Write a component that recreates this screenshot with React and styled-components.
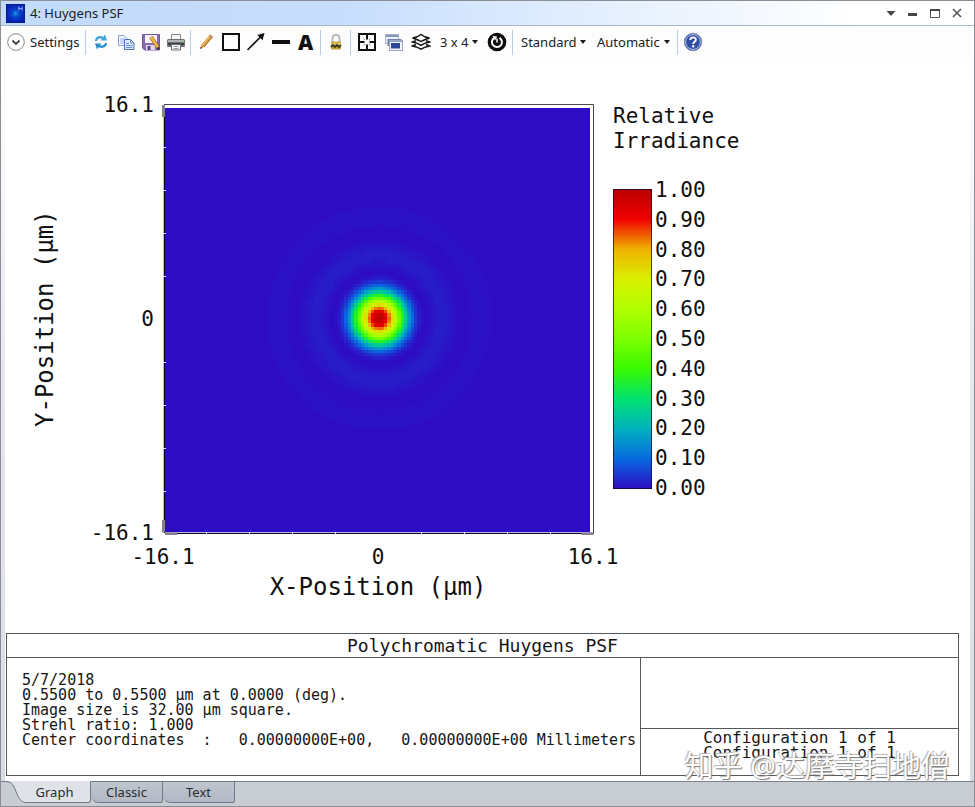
import React from 'react';
import styled, { createGlobalStyle, css } from 'styled-components';

const ui = '"Noto Sans", "Open Sans", sans-serif';
const mono = '"DejaVu Sans Mono", "Liberation Mono", monospace';

const GlobalStyle = createGlobalStyle`
  *, *::before, *::after {
    box-sizing: border-box;
  }

  body {
    margin: 0;
    background: #ffffff;
  }

  button, select {
    font: inherit;
    color: inherit;
  }
`;

const Window = styled.div`
  position: relative;
  display: flex;
  flex-direction: column;
  min-height: 100vh;
  border: 1px solid #8b8e94;
  background: #ffffff;
  color: #1c1c1c;
  font-family: ${ui};
  font-size: 13px;
`;

const TitleBar = styled.header`
  display: flex;
  align-items: center;
  height: 25px;
  padding: 0 6px 0 5px;
  border-bottom: 1px solid #a9b7cc;
  background: linear-gradient(90deg, #c3dbfb 0%, #c6ddfd 34%, #e2eefe 60%, #ffffff 88%);
`;

const WindowTitle = styled.h1`
  flex: 1;
  margin: 0 0 0 5px;
  font-size: 13px;
  font-weight: 400;
  line-height: 20px;
`;

const WindowButton = styled.button`
  display: flex;
  align-items: center;
  justify-content: center;
  width: 22px;
  height: 20px;
  padding: 0;
  border: 0;
  background: none;
`;

const Toolbar = styled.div`
  display: flex;
  align-items: center;
  height: 32px;
  padding-left: 4px;
  background: #fdfdfe;
`;

const SettingsButton = styled.button`
  display: flex;
  align-items: center;
  gap: 4px;
  width: 78px;
  height: 28px;
  padding: 0 0 0 1px;
  border: 0;
  background: none;
`;

const ToolButton = styled.button`
  display: flex;
  align-items: center;
  justify-content: center;
  width: ${({ $wide }) => ($wide ? 27 : 25)}px;
  height: 28px;
  padding: 0;
  border: 0;
  background: none;
`;

const Separator = styled.span`
  width: 1px;
  height: 25px;
  margin: 0 2px;
  background: #bccbe4;
`;

const DropDownWrapper = styled.label`
  display: flex;
  align-items: center;
  width: ${({ $width }) => $width}px;
  height: 28px;
  padding-left: 6px;
`;

const DropDownSelect = styled.select`
  flex: 1;
  min-width: 0;
  padding: 0;
  border: 0;
  appearance: none;
  background: none;
`;

const Caret = styled.svg`
  flex: none;
  width: 6px;
  height: 4px;
  margin-right: 5px;
`;

const Main = styled.main`
  display: flex;
  flex: 1;
  flex-direction: column;
  justify-content: space-between;
  padding-bottom: 5px;
  border: solid transparent;
  border-width: 0 4px;
  background:
    linear-gradient(#ffffff, #ffffff) padding-box,
    linear-gradient(#ffffff 0%, #e6e8ec 45%, #d9dce1 100%) border-box;
`;

const Chart = styled.section`
  display: grid;
  grid-template-columns: 28px 103px 432px 1fr;
  grid-template-rows: 432px auto;
  padding: 45px 0 24px 26px;
  color: #101010;
  font-family: ${mono};
`;

const AxisTitle = styled.div`
  font-size: 24px;
  line-height: 28px;
  text-align: center;
  white-space: nowrap;

  ${({ $vertical }) =>
    $vertical &&
    css`
      writing-mode: vertical-rl;
      transform: rotate(180deg);
    `}
`;

const YTicks = styled.div`
  display: flex;
  flex-direction: column;
  justify-content: space-between;
  margin: -8px 0;
  font-size: 21px;
  line-height: 20px;
  text-align: right;
`;

const XAxis = styled.div`
  grid-column: 3;
  padding-top: 12px;
`;

const XTicks = styled.div`
  display: flex;
  justify-content: space-between;
  margin: 0 -32px 6px;
  font-size: 21px;
  line-height: 20px;
  text-align: center;

  span {
    width: 66px;
  }
`;

const PlotArea = styled.svg`
  display: block;
  width: 432px;
  height: 432px;
`;

const YTickColumn = styled.div`
  display: grid;
  padding-right: 8px;
`;

const Legend = styled.div`
  padding: 1px 0 0 19px;
`;

const LegendTitle = styled.div`
  margin-bottom: 35px;
  font-size: 21px;
  line-height: 25px;
`;

const LegendScale = styled.div`
  display: flex;
  gap: 3px;
  height: 300px;
`;

const LegendBar = styled.div`
  width: 39px;
  border: 1px solid rgba(20, 10, 40, 0.75);
  background: linear-gradient(to top, ${({ $stops }) => $stops});
  background-origin: border-box;
`;

const LegendTicks = styled.div`
  display: flex;
  flex-direction: column;
  justify-content: space-between;
  margin: -9px 0;
  font-size: 21px;
  line-height: 20px;
`;

const InfoPanel = styled.section`
  margin: 0 11px 0 1px;
  border: 1px solid #55585a;
  color: #161616;
  font-family: ${mono};
`;

const InfoTitle = styled.h2`
  margin: 0;
  border-bottom: 1px solid #55585a;
  font-size: 18px;
  font-weight: 400;
  line-height: 23px;
  text-align: center;
`;

const InfoBody = styled.div`
  display: grid;
  grid-template-columns: 2fr 1fr;
`;

const InfoText = styled.pre`
  min-height: 117px;
  margin: 0;
  padding: 15px 0 0 15px;
  border-right: 1px solid #55585a;
  font-family: inherit;
  font-size: 15px;
  line-height: 15px;
`;

const InfoSide = styled.div`
  display: grid;
  grid-template-rows: 70px 1fr;
`;

const Configuration = styled.div`
  padding-top: 1px;
  border-top: 1px solid #55585a;
  font-size: 16px;
  line-height: 15px;
  text-align: center;
`;

const TabStrip = styled.nav`
  display: flex;
  align-items: flex-start;
  height: 25px;
  background: #c8ccd3;
  box-shadow: inset 0 1px #7d828c;
`;

const TabEdge = styled.svg`
  flex: none;
  width: 24px;
  height: 22px;
`;

const Tab = styled.button`
  width: 72px;
  height: 22px;
  padding: 0;
  border: 1px solid #737a88;
  border-left-width: 0;
  border-radius: 0 0 2px 8px;
  background: linear-gradient(#bfc5cf, #b2b9c5);
  color: #2a2d33;
  line-height: 20px;

  ${({ $active }) =>
    $active &&
    css`
      width: 66px;
      padding-right: 6px;
      border-top-color: #dfe2e6;
      border-radius: 0 0 3px 0;
      background: #dfe2e6;
    `}
`;

const Watermark = styled.div`
  position: absolute;
  right: 24px;
  bottom: 22px;
  color: #ffffff;
  font-family: 'Noto Sans', 'Noto Sans CJK SC', sans-serif;
  font-size: 29px;
  line-height: 36px;
  text-shadow: 1px 1px 1px #777777, -1px -1px 1px #b5b5b5;
  white-space: nowrap;
  pointer-events: none;
`;

// false colour scale, from zero to peak
const SCALE = [
  [0, [46, 12, 196]],
  [0.1, [8, 104, 224]],
  [0.2, [0, 176, 190]],
  [0.3, [0, 226, 112]],
  [0.4, [56, 250, 0]],
  [0.5, [124, 255, 0]],
  [0.6, [176, 255, 0]],
  [0.7, [216, 240, 0]],
  [0.8, [240, 176, 0]],
  [0.9, [240, 0, 0]],
  [1, [186, 0, 0]],
];

const CELLS = 128;
const AIRY_UNIT = 11.5;
const LEVELS = 250;

const colorAt = (value) => {
  const i = Math.min(Math.floor(value * 10), 9);
  const t = value * 10 - i;
  const mixed = SCALE[i][1].map((c, k) => Math.round(c + (SCALE[i + 1][1][k] - c) * t));
  return `rgb(${mixed.join(',')})`;
};

const besselJ1 = (x) => {
  const steps = 40;
  let sum = 0;
  for (let i = 0; i < steps; i += 1) {
    const t = ((i + 0.5) * Math.PI) / steps;
    sum += Math.cos(t - x * Math.sin(t));
  }
  return sum / steps;
};

const irradiance = (r) => {
  const x = (Math.PI * r) / AIRY_UNIT;
  return x < 0.01 ? 1 : ((2 * besselJ1(x)) / x) ** 2;
};

// one path per colour level, made of horizontal runs of cells
const buildSpot = () => {
  const paths = {};
  for (let y = 0; y < CELLS; y += 1) {
    let start = 0;
    let level = null;
    for (let x = 0; x <= CELLS; x += 1) {
      const r = Math.hypot(x - 64, y - 63);
      const next = x === CELLS ? null : Math.round(irradiance(r) * LEVELS);
      if (next !== level) {
        if (level) {
          paths[level] = `${paths[level] || ''}M${start} ${y}H${x}V${y + 1}H${start}Z`;
        }
        start = x;
        level = next;
      }
    }
  }
  return Object.entries(paths);
};

const SPOT = buildSpot();
const TICKS = [44, 87, 130, 173, 259, 302, 345, 388];
const LEGEND_VALUES = ['1.00', '0.90', '0.80', '0.70', '0.60', '0.50', '0.40', '0.30', '0.20', '0.10', '0.00'];
const LEGEND_STOPS = SCALE.map(([v, c]) => `rgb(${c.join(',')}) ${v * 100}%`).join(', ');

const INFO = `5/7/2018
0.5500 to 0.5500 µm at 0.0000 (deg).
Image size is 32.00 µm square.
Strehl ratio: 1.000
Center coordinates  :   0.00000000E+00,   0.00000000E+00 Millimeters`;

const Plot = () => (
  <PlotArea viewBox="0 0 432 432" role="img" aria-label="Point spread function">
    <path d="M2 1.5H431.5V431" fill="none" stroke="#4a464e" />
    <rect x="3" y="5" width="425" height="424" fill="#2e0cc4" />
    <svg x="3" y="5" width="425" height="424" viewBox="0 0 128 128" preserveAspectRatio="none">
      <g shapeRendering="crispEdges">
        {SPOT.map(([level, d]) => (
          <path key={level} d={d} fill={colorAt(level / LEVELS)} />
        ))}
      </g>
    </svg>
    <path d="M1.5 5V430" stroke="#b9b5cc" />
    <path d="M2.5 5V430" stroke="#0c0828" />
    <path d="M3 429.5H430" stroke="#b9b5e0" />
    <path d="M3 430.5H430" stroke="#0c0828" />
    {TICKS.map((t) => (
      <path key={t} d={`M1 ${t}.5H4M${t}.5 429V431`} stroke="#e8e6f4" />
    ))}
    <path d="M1.5 2V14M1.5 417V429M3 431H15M419 431H431" stroke="#85818f" strokeWidth="3" />
  </PlotArea>
);

const Icon = ({ size = 20, children }) => (
  <svg width={size} height={size} viewBox="0 0 20 20" fill="none" aria-hidden="true">
    {children}
  </svg>
);

const AppIcon = () => (
  <Icon size={19}>
    <defs>
      <radialGradient id="spot">
        <stop offset="0" stopColor="#1c9be8" />
        <stop offset="0.35" stopColor="#0a4ad0" />
        <stop offset="1" stopColor="#0620b0" />
      </radialGradient>
    </defs>
    <rect x="0.5" y="0.5" width="19" height="19" fill="url(#spot)" stroke="#06188a" />
    <path d="M13.5 2.5V7M17 2.5V7M13.5 4.7H17" stroke="#8fb4f4" />
  </Icon>
);

const ExpandIcon = () => (
  <Icon>
    <circle cx="10" cy="10" r="8.3" stroke="#8a8a8a" fill="#ffffff" />
    <path d="M6.5 8.5L10 12L13.5 8.5" stroke="#404040" strokeWidth="1.8" />
  </Icon>
);

const RefreshIcon = () => (
  <Icon>
    <path d="M4 9C4 5.500 7 3.500 11 4.200L12.500 4.800L14 2.500L16 8.500L9.500 8.500L11 6.800C8 6 6.500 7 6 9Z" fill="#45a6dc" />
    <path d="M16 11C16 14.500 13 16.500 9 15.800L7.500 15.200L6 17.500L4 11.500L10.500 11.500L9 13.200C12 14 13.500 13 14 11Z" fill="#2d8dcc" />
  </Icon>
);

const CopyIcon = () => (
  <Icon>
    <path d="M2.500 3.500H8L11.500 7V13.500H2.500Z" fill="#eef4fd" stroke="#86a5d4" />
    <path d="M4 7H9M4 9H9M4 11H8" stroke="#9db8e2" />
    <path d="M8.500 7.500H14.500L18 11V17.500H8.500Z" fill="#dce9fb" stroke="#4774bc" />
    <path d="M14.500 7.500V11H18M10 11.500H13M10 13.500H16.500M10 15.500H16.500" stroke="#6c94d2" />
  </Icon>
);

const SaveIcon = () => (
  <Icon>
    <path d="M1.500 2.500H18.500V18H3.500L1.500 16Z" fill="#8c6bb2" stroke="#77569e" />
    <rect x="4" y="3" width="12" height="8" fill="#f6f2fa" />
    <rect x="5" y="13" width="9" height="5" fill="#e0d8ec" />
    <rect x="6.500" y="14" width="3" height="4" fill="#5d4386" />
    <path d="M10 5L17 15.500" stroke="#99651b" strokeWidth="4" />
    <path d="M10 5L17 15.500" stroke="#f0b747" strokeWidth="2.500" />
    <path d="M15.500 16.500L18 14.500L18.500 18Z" fill="#33241a" />
  </Icon>
);

const PrintIcon = () => (
  <Icon>
    <path d="M5.500 8V2.500H14.500V8" fill="#f8f8f8" stroke="#87898c" />
    <rect x="1" y="7" width="18" height="8" rx="1.500" fill="#6f7378" />
    <path d="M2 9H18" stroke="#c6cacd" strokeWidth="1.500" />
    <path d="M2 12H18" stroke="#3c4044" strokeWidth="2" />
    <path d="M5.500 12.500H14.500V18H5.500Z" fill="#f4f5f6" stroke="#6a6d71" />
    <path d="M7.500 14.500H12.500M7.500 16.500H12.500" stroke="#999c9f" />
    <circle cx="16.500" cy="10" r="1" fill="#6cc04a" />
  </Icon>
);

const PencilIcon = () => (
  <Icon>
    <path d="M4 17L5.300 12.800L14 2.500L16.700 4.800L8 15Z" fill="#dc9b42" />
    <path d="M6 13.500L14.500 3.500" stroke="#f3c77c" />
    <path d="M8 15L16.700 4.800" stroke="#a96b22" />
    <path d="M14 2.500L16.700 4.800L15.500 6.200L12.800 3.900Z" fill="#c58b78" />
    <path d="M4 17L4.700 14.800L6.200 16Z" fill="#4f3929" />
  </Icon>
);

const SquareIcon = () => (
  <Icon>
    <rect x="2" y="2" width="16" height="16" stroke="#101010" strokeWidth="2" />
  </Icon>
);

const ArrowIcon = () => (
  <Icon>
    <path d="M1.500 18L15 4.500" stroke="#101010" strokeWidth="1.600" />
    <path d="M18.500 1L16.500 8.200L11.300 3Z" fill="#101010" />
  </Icon>
);

const LineIcon = () => (
  <Icon>
    <rect x="1" y="8" width="18" height="4" fill="#101010" />
  </Icon>
);

const LetterIcon = styled.span`
  color: #101010;
  font-family: 'Open Sans', sans-serif;
  font-size: 21px;
  font-weight: 800;
  line-height: 24px;
`;

const LockIcon = () => (
  <Icon>
    <path d="M6.500 10V6.500C6.500 1.500 13.500 1.500 13.500 6.500V10" stroke="#b7babe" strokeWidth="2" />
    <rect x="5" y="9.500" width="10" height="8" rx="1" fill="#c5a83e" />
    <path d="M5 12H15" stroke="#ead984" strokeWidth="1.500" />
    <path d="M5 15L7 13L9 15L11 13L13 15L15 13" stroke="#493e20" strokeWidth="2" />
  </Icon>
);

const TargetIcon = () => (
  <Icon>
    <rect x="2" y="2" width="16" height="16" stroke="#101010" strokeWidth="2" />
    <path d="M10 2V7.500M10 12.500V18M2 10H7.500M12.500 10H18" stroke="#101010" strokeWidth="2" />
    <path d="M6.500 6.500L8 8M13.500 6.500L12 8M6.500 13.500L8 12M13.500 13.500L12 12" stroke="#8a8a8a" />
  </Icon>
);

const WindowsIcon = () => (
  <Icon>
    <rect x="1.500" y="2.500" width="13" height="9" fill="#edf1f8" stroke="#a9b4cc" />
    <path d="M2 4H14" stroke="#8196bd" strokeWidth="2" />
    <path d="M4.500 14V8H17.500" fill="#5670ad" stroke="#6b81b4" strokeWidth="2" />
    <rect x="5.500" y="8.500" width="13" height="10" fill="#f4f6fb" stroke="#9aa7c4" />
    <rect x="7" y="11" width="9" height="5.500" fill="#2a4798" />
    <path d="M6 9.500H18" stroke="#8da2cb" />
  </Icon>
);

// three stacked sheets with slightly wavy edges
const LayersIcon = () => (
  <Icon>
    <path
      d="M1.500 6C4 5.800 7.500 4.500 10 2.500C12.500 4.500 16 5.800 18.500 6C16 6.800 12.500 7.800 10 9.500C7.500 7.800 4 6.800 1.500 6Z"
      stroke="#151515"
      strokeWidth="1.500"
    />
    <path
      d="M5 8.700L1.500 10C4 10.500 7.500 11.500 10 13.300C12.500 11.500 16 10.500 18.500 10L15 8.700M5 12.500L1.500 14C4 14.500 7.500 15.500 10 17.200C12.500 15.500 16 14.500 18.500 14L15 12.500"
      stroke="#151515"
      strokeWidth="1.500"
    />
  </Icon>
);

const ResetIcon = () => (
  <Icon>
    <circle cx="10" cy="10" r="9.300" fill="#0c0c0c" />
    <path d="M12.500 5.800A5 5 0 1 1 7.200 5.900" stroke="#ffffff" strokeWidth="2" />
    <path d="M5.500 3.800L10.200 4.500L8 8.500Z" fill="#ffffff" />
    <path d="M10 6.500V10.500" stroke="#ffffff" strokeWidth="1.500" />
  </Icon>
);

const HelpIcon = () => (
  <Icon>
    <circle cx="10" cy="10" r="8.800" fill="#2d4fa6" stroke="#8b93b8" />
    <circle cx="10" cy="10" r="7.400" stroke="#b9c5e5" />
    <path d="M7.300 8C7.300 4.600 12.900 4.600 12.900 7.800C12.900 9.900 10.200 9.800 10.200 12" stroke="#ffffff" strokeWidth="1.900" />
    <circle cx="10.200" cy="14.300" r="1.200" fill="#ffffff" />
  </Icon>
);

const DropDown = ({ label, value, width }) => (
  <DropDownWrapper $width={width}>
    <DropDownSelect aria-label={label} defaultValue={value}>
      <option>{value}</option>
    </DropDownSelect>
    <Caret viewBox="0 0 6 4" aria-hidden="true">
      <path d="M0 0H6L3 4Z" fill="#1c1c1c" />
    </Caret>
  </DropDownWrapper>
);

const fileTools = [
  ['Refresh', RefreshIcon],
  ['Copy', CopyIcon],
  ['Save', SaveIcon],
  ['Print', PrintIcon],
];

const drawTools = [
  ['Pencil', PencilIcon],
  ['Rectangle', SquareIcon],
  ['Arrow', ArrowIcon],
  ['Line', LineIcon],
];

const viewTools = [
  ['Active cursor', TargetIcon],
  ['Clone window', WindowsIcon],
  ['Overlay', LayersIcon],
];

const Tools = ({ items, wide }) =>
  items.map(([label, Glyph]) => (
    <ToolButton key={label} aria-label={label} $wide={wide}>
      <Glyph />
    </ToolButton>
  ));

const App = () => (
  <>
    <GlobalStyle />
    <Window>
      <TitleBar>
        <AppIcon />
        <WindowTitle>4: Huygens PSF</WindowTitle>
        <WindowButton aria-label="Window menu">
          <svg width="10" height="5" viewBox="0 0 10 5">
            <path d="M0.500 0H9.500L5 5Z" fill="#454545" />
          </svg>
        </WindowButton>
        <WindowButton aria-label="Minimize">
          <svg width="10" height="10" viewBox="0 0 10 10">
            <rect x="0" y="5" width="9" height="3" fill="#454545" />
          </svg>
        </WindowButton>
        <WindowButton aria-label="Maximize">
          <svg width="10" height="9" viewBox="0 0 10 9">
            <path d="M0.500 1V8.500H9.500V1" fill="none" stroke="#555555" />
            <rect width="10" height="2" fill="#454545" />
          </svg>
        </WindowButton>
        <WindowButton aria-label="Close">
          <svg width="10" height="10" viewBox="0 0 10 10">
            <path d="M1 1L9 9M9 1L1 9" stroke="#505050" strokeWidth="1.500" />
          </svg>
        </WindowButton>
      </TitleBar>

      <Toolbar>
        <SettingsButton>
          <ExpandIcon />
          Settings
        </SettingsButton>
        <Separator />
        <Tools items={fileTools} />
        <Separator />
        <Tools items={drawTools} />
        <ToolButton aria-label="Text annotation">
          <LetterIcon>A</LetterIcon>
        </ToolButton>
        <Separator />
        <ToolButton aria-label="Lock window">
          <LockIcon />
        </ToolButton>
        <Separator />
        <Tools items={viewTools} wide />
        <DropDown label="Window size" value="3 x 4" width={49} />
        <ToolButton aria-label="Reset" $wide>
          <ResetIcon />
        </ToolButton>
        <Separator />
        <DropDown label="Line thickness" value="Standard" width={76} />
        <DropDown label="Scaling" value="Automatic" width={84} />
        <Separator />
        <ToolButton aria-label="Help">
          <HelpIcon />
        </ToolButton>
      </Toolbar>

      <Main>
        <Chart>
          <AxisTitle $vertical>Y-Position (µm)</AxisTitle>
          <YTickColumn>
            <YTicks>
              <span>16.1</span>
              <span>0</span>
              <span>-16.1</span>
            </YTicks>
          </YTickColumn>
          <Plot />
          <Legend>
            <LegendTitle>
              Relative
              <br />
              Irradiance
            </LegendTitle>
            <LegendScale>
              <LegendBar $stops={LEGEND_STOPS} />
              <LegendTicks>
                {LEGEND_VALUES.map((value) => (
                  <span key={value}>{value}</span>
                ))}
              </LegendTicks>
            </LegendScale>
          </Legend>
          <XAxis>
            <XTicks>
              <span>-16.1</span>
              <span>0</span>
              <span>16.1</span>
            </XTicks>
            <AxisTitle>X-Position (µm)</AxisTitle>
          </XAxis>
        </Chart>

        <InfoPanel>
          <InfoTitle>Polychromatic Huygens PSF</InfoTitle>
          <InfoBody>
            <InfoText>{INFO}</InfoText>
            <InfoSide>
              <div />
              <Configuration>
                Configuration 1 of 1
                <br />
                Configuration 1 of 1
              </Configuration>
            </InfoSide>
          </InfoBody>
        </InfoPanel>
      </Main>

      <TabStrip>
        <TabEdge viewBox="0 0 24 22" aria-hidden="true">
          <path d="M6 0H24V22C16 21 17 4 9 1Z" fill="#dfe2e6" />
          <path d="M0 0.500H6C16 1 14 20 24 21.500" fill="none" stroke="#737a88" />
        </TabEdge>
        <Tab $active>Graph</Tab>
        <Tab>Classic</Tab>
        <Tab>Text</Tab>
      </TabStrip>
      <Watermark>知乎 @达摩寺扫地僧</Watermark>
    </Window>
  </>
);

export default App;
